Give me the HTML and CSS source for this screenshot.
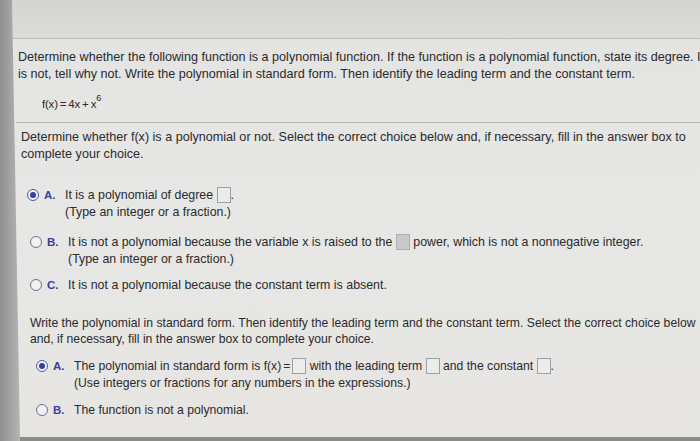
FILE: index.html
```html
<!DOCTYPE html>
<html>
<head>
<meta charset="utf-8">
<link rel="stylesheet" href="styles.css">
</head>
<body>
<div class="screen">
  <div class="bezel"></div>
  <div class="page">
    <div class="topband"></div>
    <div class="content">
      <p class="para p1">Determine whether the following function is a polynomial function. If the function is a polynomial function, state its degree. If it<br>is not, tell why not. Write the polynomial in standard form. Then identify the leading term and the constant term.</p>
      <div class="formula">f(x)<span class="op">=</span>4x<span class="op">+</span>x<sup>6</sup></div>
      <hr class="sep">
      <p class="para p2">Determine whether f(x) is a polynomial or not. Select the correct choice below and, if necessary, fill in the answer box to<br>complete your choice.</p>
      <div class="choices c1">
        <div class="choice ca">
          <span class="radio on"></span><span class="lbl">A.</span>
          <div class="ctext">
            <div>It is a polynomial of degree <span class="box"></span>.</div>
            <div>(Type an integer or a fraction.)</div>
          </div>
        </div>
        <div class="choice cb">
          <span class="radio"></span><span class="lbl">B.</span>
          <div class="ctext">
            <div>It is not a polynomial because the variable x is raised to the <span class="box grey"></span> power, which is not a nonnegative integer.</div>
            <div>(Type an integer or a fraction.)</div>
          </div>
        </div>
        <div class="choice cc">
          <span class="radio"></span><span class="lbl">C.</span>
          <div class="ctext">
            <div>It is not a polynomial because the constant term is absent.</div>
          </div>
        </div>
      </div>
      <div class="sec3">
        <p class="para p3">Write the polynomial in standard form. Then identify the leading term and the constant term. Select the correct choice below<br>and, if necessary, fill in the answer box to complete your choice.</p>
        <div class="choices c2">
          <div class="choice">
            <span class="radio on"></span><span class="lbl">A.</span>
            <div class="ctext">
              <div>The polynomial in standard form is f(x)<span class="op">=</span><span class="box"></span> with the leading term <span class="box"></span> and the constant <span class="box"></span>.</div>
              <div>(Use integers or fractions for any numbers in the expressions.)</div>
            </div>
          </div>
          <div class="choice cb2">
            <span class="radio"></span><span class="lbl">B.</span>
            <div class="ctext">
              <div>The function is not a polynomial.</div>
            </div>
          </div>
        </div>
      </div>
    </div>
    <div class="bottom"></div>
  </div>
</div>
</body>
</html>
```
FILE: styles.css
```css
html, body {
  margin: 0;
  padding: 0;
}
body {
  width: 700px;
  height: 441px;
  overflow: hidden;
  background: #e4e4e2;
  font-family: "Liberation Sans", Arial, sans-serif;
  color: #2a2a2c;
}
.screen {
  position: relative;
  display: flex;
  width: 700px;
  height: 441px;
  overflow: hidden;
}
.bezel {
  position: absolute;
  left: 0;
  top: 0;
  width: 22px;
  height: 441px;
  background: linear-gradient(90deg, #8e8e8e 0%, #a9a9a9 60%, #b8b8b6 100%);
  clip-path: polygon(0 0, 12px 0, 20px 437px, 20px 441px, 0 441px);
  z-index: 2;
}
.page {
  flex: 1;
  display: flex;
  flex-direction: column;
  background: linear-gradient(180deg, #e3e3e1 0%, #e7e7e5 50%, #e6e5e2 100%);
}
.topband {
  height: 38px;
  flex: none;
  background: linear-gradient(180deg, #d4d4d2 0%, #dcdcda 100%);
  border-bottom: 1px solid #b9b9b7;
}
.content {
  flex: 1;
  padding-top: 10px;
  font-size: 12.6px;
  line-height: 17px;
}
.para {
  margin: 0;
  white-space: nowrap;
}
.p1 { padding-left: 18px; }
.formula {
  padding-left: 42px;
  margin-top: 13px;
  font-size: 11.5px;
  line-height: 16px;
  letter-spacing: -0.2px;
}
.formula sup {
  font-size: 9px;
  position: relative;
  top: -2px;
  vertical-align: super;
  line-height: 0;
}
.op {
  padding: 0 2px;
}
.sep {
  margin: 10px 0 0 16px;
  border: 0;
  border-top: 1px solid #b8b8b6;
  height: 0;
}
.p2 { padding-left: 21px; margin-top: 6px; }
.choices {
  display: flex;
  flex-direction: column;
}
.c1 { margin-top: 24px; padding-left: 27px; font-size: 12.4px; }
.choice {
  display: flex;
  align-items: flex-start;
}
.cb { margin-top: 13px; padding-left: 3px; }
.cc { margin-top: 9px; padding-left: 3px; }
.radio {
  flex: none;
  width: 10px;
  height: 10px;
  border: 1px solid #6c6f98;
  border-radius: 50%;
  margin-top: 2px;
  background: #f2f2f2;
  display: flex;
  align-items: center;
  justify-content: center;
}
.radio.on {
  border-color: #4a5ab0;
}
.radio.on::after {
  content: "";
  width: 6px;
  height: 6px;
  border-radius: 50%;
  background: #2f3fa8;
}
.lbl {
  flex: none;
  width: 21px;
  margin-left: 5px;
  font-weight: bold;
  color: #3a3f9a;
  font-size: 11.5px;
}
.ctext {
  white-space: nowrap;
}
.box {
  display: inline-block;
  width: 12px;
  height: 14px;
  border: 1px solid #9aa0a8;
  background: #ececea;
  vertical-align: -4px;
}
.box.grey {
  background: #c9c9c9;
  border-color: #aeb0b4;
}
.sec3 { font-size: 12.2px; }
.p3 { padding-left: 30px; margin-top: 21px; line-height: 16px; }
.c2 { margin-top: 11px; padding-left: 36px; }
.cb2 { margin-top: 10px; }
.bottom {
  height: 4px;
  flex: none;
  background: #8c8c8a;
}
```
